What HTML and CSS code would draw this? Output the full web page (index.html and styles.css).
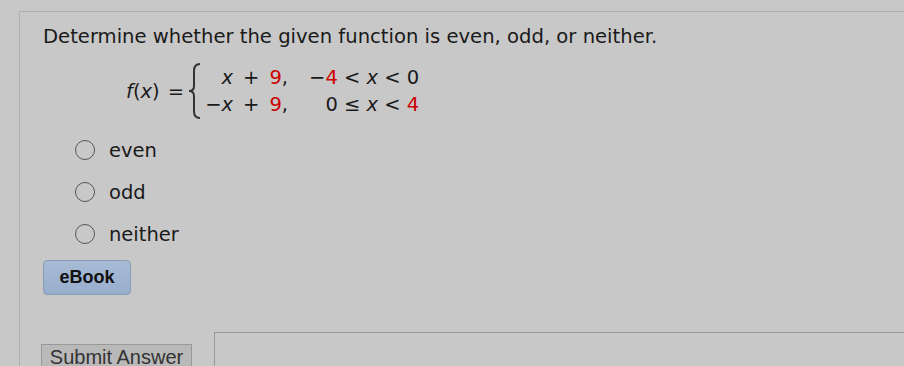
FILE: index.html
```html
<!DOCTYPE html>
<html lang="en">
<head>
    <meta charset="UTF-8">
    <title>Question</title>
    <link rel="stylesheet" href="styles.css">
</head>
<body>
    <div class="frame">
        <p class="prompt">Determine whether the given function is even, odd, or neither.</p>

        <div class="math">
            <span class="lhs"><i>f</i>(<i>x</i>) <span class="op">=</span></span>
            <svg class="brace" width="16" height="58" viewBox="0 0 16 58">
                <path d="M14 2 Q8 2 8 9 L8 24 Q8 29 3 29 Q8 29 8 34 L8 49 Q8 56 14 56" fill="none" stroke="#333" stroke-width="2"/>
            </svg>
            <div class="cases">
                <span class="expr"><i>x</i><span class="op">+</span><b class="red">9</b>,</span>
                <span class="cond">&minus;<b class="red">4</b> &lt; <i>x</i> &lt; 0</span>
                <span class="expr">&minus;<i>x</i><span class="op">+</span><b class="red">9</b>,</span>
                <span class="cond">0 &le; <i>x</i> &lt; <b class="red">4</b></span>
            </div>
        </div>

        <ul class="choices">
            <li><span class="radio"></span>even</li>
            <li><span class="radio"></span>odd</li>
            <li><span class="radio"></span>neither</li>
        </ul>

        <button class="ebook">eBook</button>

        <div class="bottom">
            <button class="submit">Submit Answer</button>
            <div class="answer-box"></div>
        </div>
    </div>
</body>
</html>
```

FILE: styles.css
```css
body { margin: 0; background-color: #c8c8c8; font-family: "DejaVu Sans", Verdana, sans-serif; color: #1a1a1a; overflow: hidden; }
.frame { margin: 11px 0 0 19px; border-top: 1px solid #b0b0b0; border-left: 1px solid #b0b0b0; padding: 14px 0 0 23px; height: 400px; }
.prompt { margin: 0; font-size: 19.6px; line-height: 22px; }
.math { display: flex; align-items: center; margin: 14px 0 0 83px; font-size: 19.5px; }
.math i { font-style: italic; }
.math b { font-weight: normal; }
.op { margin: 0 10px; }
.red { color: #c00; }
.lhs { margin-right: -4px; }
.lhs .op { margin: 0 6px 0 2px; }
.brace { display: block; margin-right: 3px; }
.cases { display: grid; grid-template-columns: auto auto; column-gap: 21px; row-gap: 4px; line-height: 23px; }
.expr, .cond { text-align: right; white-space: pre; }
.choices { list-style: none; margin: 9px 0 0 32px; padding: 0; font-size: 19.5px; }
.choices li { display: flex; align-items: center; height: 42px; }
.radio { width: 18px; height: 18px; border: 1px solid #555; border-radius: 50%; margin-right: 14px; }
.ebook { display: block; margin-top: 5px; width: 88px; height: 35px; border: 1px solid #8a9cb4; border-radius: 4px; background: linear-gradient(#a7bbd4, #98aecd); font-family: "Liberation Sans", Arial, sans-serif; font-weight: bold; font-size: 18px; color: #111; padding: 0; }
.bottom { display: flex; margin-top: 37px; align-items: flex-start; }
.submit { margin: 12px 0 0 -2px; width: 151px; padding: 2px 0 0; line-height: 20px; border: 1px solid #999; background-color: #b9b9b9; font-family: "Liberation Sans", Arial, sans-serif; font-size: 20px; color: #333; }
.answer-box { flex-grow: 1; margin-left: 22px; height: 60px; border-top: 1px solid #999; border-left: 1px solid #999; }
```
